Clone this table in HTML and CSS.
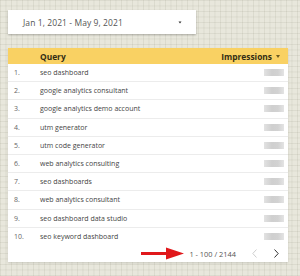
FILE: index.html
```html
<!DOCTYPE html>
<html>
<head>
<meta charset="utf-8">
<link rel="stylesheet" href="styles.css">
</head>
<body>
<div class="page">
  <div class="date-box">
    <span class="date-text">Jan 1, 2021 - May 9, 2021</span>
    <svg class="caret" width="4" height="3" viewBox="0 0 4 3"><path d="M0.5 0.5H3.5L2 2.5Z" fill="#333"/></svg>
  </div>
  <div class="card">
    <div class="thead">
      <span></span>
      <span class="th-query">Query</span>
      <span class="th-imp">Impressions <svg width="4" height="3" viewBox="0 0 4 3"><path d="M0 0H4L2 3Z" fill="#6b5a1e"/></svg></span>
    </div>
    <div class="row"><span class="num">1.</span><span class="q">seo dashboard</span><span class="val"></span></div>
    <div class="row"><span class="num">2.</span><span class="q">google analytics consultant</span><span class="val"></span></div>
    <div class="row"><span class="num">3.</span><span class="q">google analytics demo account</span><span class="val"></span></div>
    <div class="row"><span class="num">4.</span><span class="q">utm generator</span><span class="val"></span></div>
    <div class="row"><span class="num">5.</span><span class="q">utm code generator</span><span class="val"></span></div>
    <div class="row"><span class="num">6.</span><span class="q">web analytics consulting</span><span class="val"></span></div>
    <div class="row"><span class="num">7.</span><span class="q">seo dashboards</span><span class="val"></span></div>
    <div class="row"><span class="num">8.</span><span class="q">web analytics consultant</span><span class="val"></span></div>
    <div class="row"><span class="num">9.</span><span class="q">seo dashboard data studio</span><span class="val"></span></div>
    <div class="row last"><span class="num">10.</span><span class="q">seo keyword dashboard</span><span class="val"></span></div>
    <div class="pager">
      <svg class="red-arrow" width="44" height="13" viewBox="0 0 44 13"><path d="M0 5H25V0.5L43 6.5L25 12.5V8H0Z" fill="#e0181b"/></svg>
      <span class="range">1 - 100 / 2144</span>
      <svg class="chev prev" width="5" height="9" viewBox="0 0 5 9"><path d="M4.5 0.5L0.8 4.5L4.5 8.5" fill="none" stroke="#c8c8c8" stroke-width="0.9"/></svg>
      <svg class="chev next" width="5" height="9" viewBox="0 0 5 9"><path d="M0.5 0.5L4.2 4.5L0.5 8.5" fill="none" stroke="#333" stroke-width="1"/></svg>
    </div>
  </div>
</div>
</body>
</html>
```
FILE: styles.css
```css
html, body {
  margin: 0;
  padding: 0;
}
body {
  width: 300px;
  height: 276px;
  overflow: hidden;
  font-family: "Open Sans", "DejaVu Sans", sans-serif;
  background-color: #e8e7dc;
  background-image:
    linear-gradient(to right, rgba(160, 160, 140, 0.18) 1px, transparent 1px),
    linear-gradient(to bottom, rgba(160, 160, 140, 0.18) 1px, transparent 1px);
  background-size: 5.5px 5.5px;
}
.page {
  padding: 10px 0 0 8px;
}
.date-box {
  width: 188px;
  height: 24px;
  box-sizing: border-box;
  background: #fff;
  box-shadow: 0 1px 2px rgba(0, 0, 0, 0.28);
  display: flex;
  align-items: center;
  justify-content: space-between;
  padding: 0 14px 0 15px;
}
.date-text {
  font-size: 8.5px;
  color: #555;
  letter-spacing: 0.08px;
}
.caret {
  display: block;
}
.card {
  margin-top: 14px;
  width: 280px;
  height: 214px;
  background: #fff;
  box-shadow: 0 1px 2px rgba(0, 0, 0, 0.12);
  display: flex;
  flex-direction: column;
}
.thead {
  height: 16px;
  flex: none;
  background: #f9d163;
  display: grid;
  grid-template-columns: 26px 1fr auto;
  align-items: center;
  padding: 0 8px 0 6px;
  font-weight: 700;
  font-size: 8.4px;
  color: #332d14;
}
.th-imp {
  display: flex;
  align-items: center;
  gap: 4px;
}
.th-imp svg {
  display: block;
}
.row {
  height: 18.2px;
  flex: none;
  box-sizing: border-box;
  border-bottom: 1px solid #ececec;
  display: grid;
  grid-template-columns: 26px 1fr auto;
  align-items: center;
  padding: 0 4px 0 6px;
  font-size: 7px;
  color: #444;
}
.row.last {
  border-bottom: none;
}
.num {
  color: #666;
}
.val {
  width: 20px;
  height: 7px;
  background: linear-gradient(to right, #e2e2e2, #cfcfcf 40%, #d2d2d2 70%, #e4e4e4);
  filter: blur(0.7px);
}
.pager {
  flex: 1;
  display: flex;
  align-items: center;
  justify-content: flex-end;
  padding: 0 9px 0 0;
}
.red-arrow {
  display: block;
  margin-right: 4px;
}
.range {
  font-size: 7.4px;
  color: #555;
  margin-right: 16px;
}
.chev {
  display: block;
}
.prev {
  margin-right: 17px;
}
```
